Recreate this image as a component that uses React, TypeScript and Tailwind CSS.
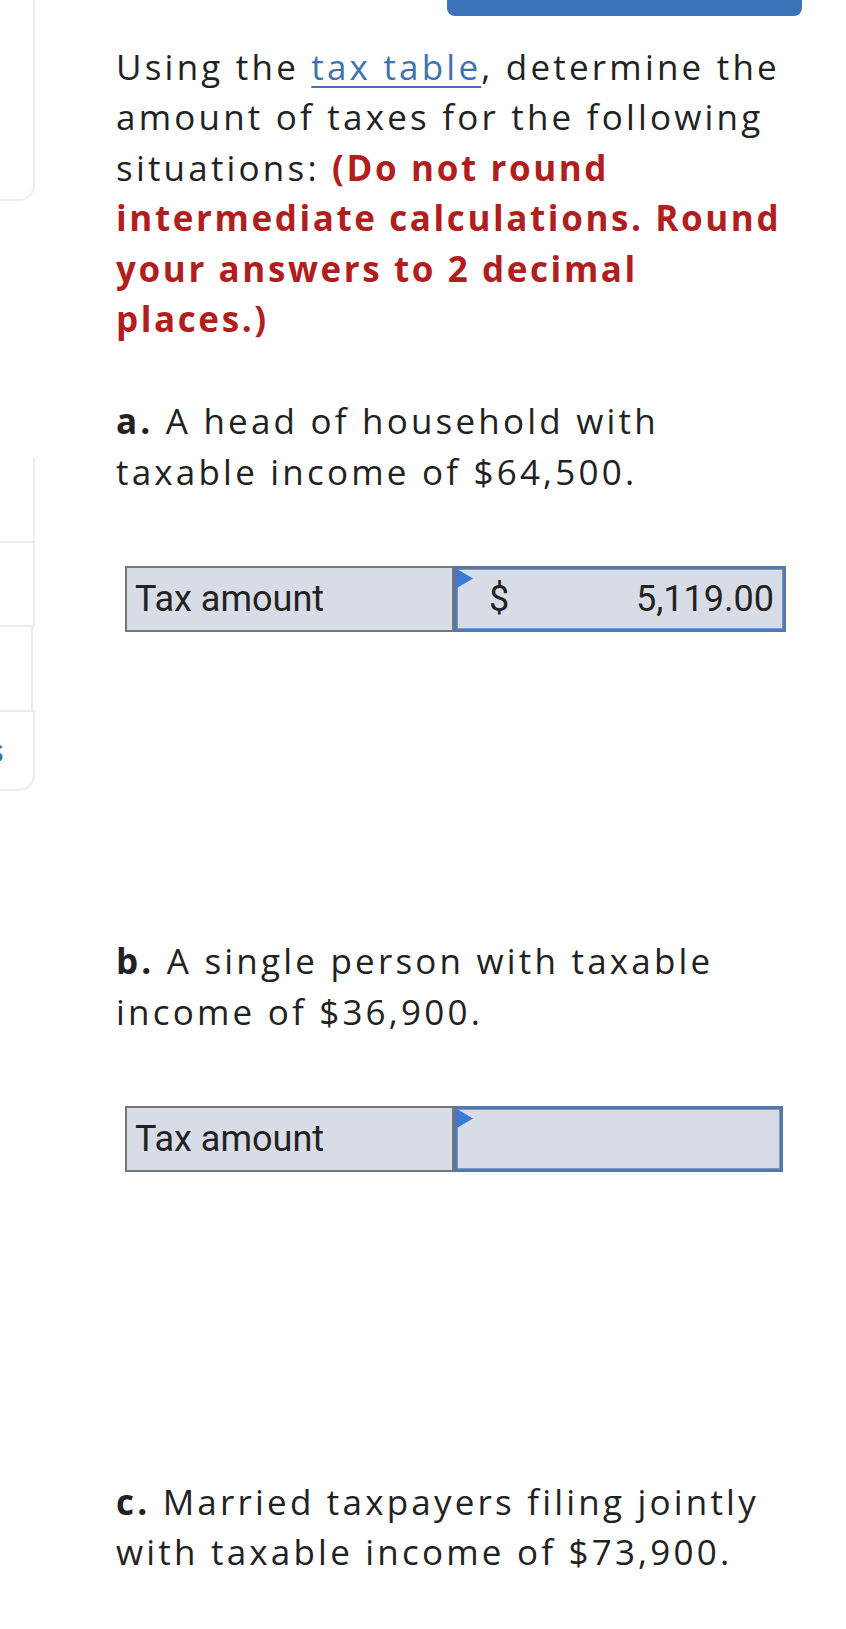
const bodyFont = { fontFamily: '"Open Sans", "Liberation Sans", sans-serif' }
const cellFont = { fontFamily: 'Roboto, "Liberation Sans", sans-serif' }

function Sidebar() {
  return (
    <div className="w-[35px] shrink-0 flex flex-col">
      <div className="h-[201px] border-r-2 border-b-2 border-[#ececec] rounded-br-2xl" />
      <div className="mt-[257px] h-[85px] border-r-2 border-b-2 border-[#ececec]" />
      <div className="h-[84px] border-r-2 border-b-2 border-[#ececec]" />
      <div className="h-[83px] w-[33px] border-r-2 border-[#ececec]" />
      <div className="h-[81px] border-t-2 border-r-2 border-b-2 border-[#ececec] rounded-br-2xl flex items-center">
        <span className="text-[#3b6fa6] text-[30px] leading-none -ml-[11px] font-semibold" style={bodyFont}>
          s
        </span>
      </div>
    </div>
  )
}

function Marker() {
  return (
    <svg className="absolute left-0 top-0" width="16" height="19" viewBox="0 0 16 19">
      <polygon points="0,0 16,9.5 0,19" fill="#3a7bd5" />
    </svg>
  )
}

function TaxRow({ value, width }: { value?: string; width: string }) {
  return (
    <div className={`ml-[9px] ${width} h-[66px] flex text-[#222] text-[36px] tracking-normal`} style={cellFont}>
      <div className="w-[329px] h-full bg-[#d8dce6] border-2 border-[#777] flex items-center pl-2">
        Tax amount
      </div>
      <div className="relative flex-1 h-full bg-[#d8dce6] border-[3px] border-[#5877a6] shadow-[inset_0_0_0_1px_#6f9ad6] flex items-center pl-[32px] pr-[9px]">
        <Marker />
        {value && (
          <>
            <span>$</span>
            <span className="ml-auto">{value}</span>
          </>
        )}
      </div>
    </div>
  )
}

export default function App() {
  return (
    <div className="w-[846px] h-[1629px] bg-white overflow-hidden flex">
      <Sidebar />
      <div
        className="ml-[81px] w-[672px] flex flex-col text-[#222] text-[35px] leading-[50.4px] tracking-[3.2px]"
        style={bodyFont}
      >
        <div className="ml-[331px] w-[355px] h-[16px] bg-[#3b74b9] rounded-b-lg" />
        <p className="mt-[26px]">
          Using the{" "}
          <a className="text-[#3f73ae] underline decoration-2 underline-offset-[6px]" href="#">
            tax table
          </a>
          , determine the amount of taxes for the following situations:{" "}
          <strong className="text-[#b01e1e] font-bold tracking-[2.6px]">
            (Do not round intermediate calculations. Round your answers to 2 decimal places.)
          </strong>
        </p>
        <p className="mt-[52px]">
          <b>a.</b> A head of household with taxable income of $64,500.
        </p>
        <div className="mt-[69px]">
          <TaxRow value="5,119.00" width="w-[661px]" />
        </div>
        <p className="mt-[304px]">
          <b>b.</b> A single person with taxable income of $36,900.
        </p>
        <div className="mt-[69px]">
          <TaxRow width="w-[658px]" />
        </div>
        <p className="mt-[305px]">
          <b>c.</b> Married taxpayers filing jointly with taxable income of $73,900.
        </p>
      </div>
    </div>
  )
}
